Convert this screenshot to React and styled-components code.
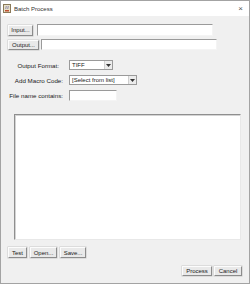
import React from "react";
import styled, { createGlobalStyle } from "styled-components";

const Global = createGlobalStyle`
  html, body { margin: 0; padding: 0; background: #f0f0f0; }
  body { font-family: "Liberation Sans", Arial, sans-serif; }
  * { box-sizing: border-box; }
`;

const Window = styled.div`
  width: 250px;
  height: 284px;
  border: 1px solid #a3a3a3;
  background: #f0f0f0;
  display: flex;
  flex-direction: column;
  font-family: "Liberation Sans", Arial, sans-serif;
  font-size: 6px;
  color: #1a1a1a;
`;

const TitleBar = styled.div`
  height: 15px;
  flex: none;
  background: #ffffff;
  display: flex;
  align-items: center;
  padding: 0 6px 0 2px;
  gap: 3px;
  font-size: 6px;
  color: #333;
`;

const TitleText = styled.span`
  flex: 1;
`;

const Close = styled.span`
  font-size: 8px;
  color: #555;
  line-height: 1;
`;

const Body = styled.div`
  flex: 1;
  display: flex;
  flex-direction: column;
  padding: 7px 7px 0 7px;
`;

const Row = styled.div`
  display: flex;
  align-items: center;
  gap: ${(p) => p.$gap || 4}px;
  margin-top: ${(p) => p.$top || 0}px;
  justify-content: ${(p) => (p.$right ? "flex-end" : "flex-start")};
`;

const Button = styled.div`
  width: ${(p) => p.$w}px;
  height: ${(p) => p.$h || 11}px;
  background: #e9e9e9;
  border: 1px solid;
  border-color: #fcfcfc #8c8c8c #8c8c8c #fcfcfc;
  box-shadow: 0 0 0 0.5px #c8c8c8;
  display: flex;
  align-items: center;
  justify-content: center;
  font-size: 6px;
  color: #1a1a1a;
  white-space: nowrap;
`;

const Field = styled.div`
  width: ${(p) => p.$w}px;
  height: ${(p) => p.$h || 11}px;
  background: #fff;
  border: 1px solid;
  border-color: #9a9a9a #f4f4f4 #f4f4f4 #9a9a9a;
  display: flex;
  align-items: center;
  padding-left: 2px;
  font-size: 6px;
  color: #1a1a1a;
`;

const Form = styled.div`
  display: grid;
  grid-template-columns: 55px auto;
  column-gap: 6px;
  row-gap: 5px;
  align-items: center;
  justify-items: start;
  margin-top: 10px;
`;

const Label = styled.div`
  justify-self: end;
  font-size: 6.2px;
  color: #1a1a1a;
  white-space: nowrap;
  margin-right: ${(p) => p.$shift || 0}px;
`;

const Choice = styled.div`
  width: ${(p) => p.$w}px;
  height: 10px;
  background: #fff;
  border: 1px solid #9a9a9a;
  display: flex;
  align-items: center;
  font-size: 6px;
  color: #1a1a1a;
`;

const ChoiceText = styled.span`
  flex: 1;
  padding-left: 2px;
  white-space: nowrap;
  overflow: hidden;
`;

const Arrow = styled.span`
  width: 8px;
  height: 8px;
  background: #ececec;
  border-left: 1px solid #d0d0d0;
  display: flex;
  align-items: center;
  justify-content: center;
`;

const TextArea = styled.div`
  margin: 13px 1px 0 6px;
  height: 126px;
  background: #fff;
  border: 1px solid;
  border-color: #8f8f8f #e8e8e8 #e8e8e8 #8f8f8f;
  box-shadow: inset 1px 1px 0 #d4d4d4;
`;

function ArrowIcon() {
  return (
    <svg width="5" height="3" viewBox="0 0 5 3">
      <path d="M0 0H5L2.5 3Z" fill="#333" />
    </svg>
  );
}

function JavaIcon() {
  return (
    <svg width="8" height="9" viewBox="0 0 8 9">
      <rect x="0.5" y="0.5" width="7" height="8" fill="#e8e0c8" stroke="#8a7a5a" />
      <path d="M2 6h4v1.5H2z" fill="#c05030" />
      <path d="M3 2c1 1-1 2 0 3M5 2c1 1-1 2 0 3" stroke="#6060a0" strokeWidth="0.7" fill="none" />
    </svg>
  );
}

export default function App() {
  return (
    <>
      <Global />
      <Window>
        <TitleBar>
          <JavaIcon />
          <TitleText>Batch Process</TitleText>
          <Close>×</Close>
        </TitleBar>
        <Body>
          <Row $top={1} $gap={4}>
            <Button $w={25} $h={11}>Input...</Button>
            <Field $w={176} $h={12} />
          </Row>
          <Row $top={3} $gap={2}>
            <Button $w={31} $h={10}>Output...</Button>
            <Field $w={176} $h={11} />
          </Row>
          <Form>
            <Label $shift={4}>Output Format:</Label>
            <Choice $w={44}>
              <ChoiceText>TIFF</ChoiceText>
              <Arrow><ArrowIcon /></Arrow>
            </Choice>
            <Label>Add Macro Code:</Label>
            <Choice $w={68}>
              <ChoiceText>[Select from list]</ChoiceText>
              <Arrow><ArrowIcon /></Arrow>
            </Choice>
            <Label>File name contains:</Label>
            <Field $w={48} $h={11} />
          </Form>
          <TextArea />
          <Row $top={7} $gap={3}>
            <Button $w={19}>Test</Button>
            <Button $w={27}>Open...</Button>
            <Button $w={26}>Save...</Button>
          </Row>
          <Row $top={8} $gap={2} $right>
            <Button $w={30} $h={10}>Process</Button>
            <Button $w={28} $h={10}>Cancel</Button>
          </Row>
        </Body>
      </Window>
    </>
  );
}
